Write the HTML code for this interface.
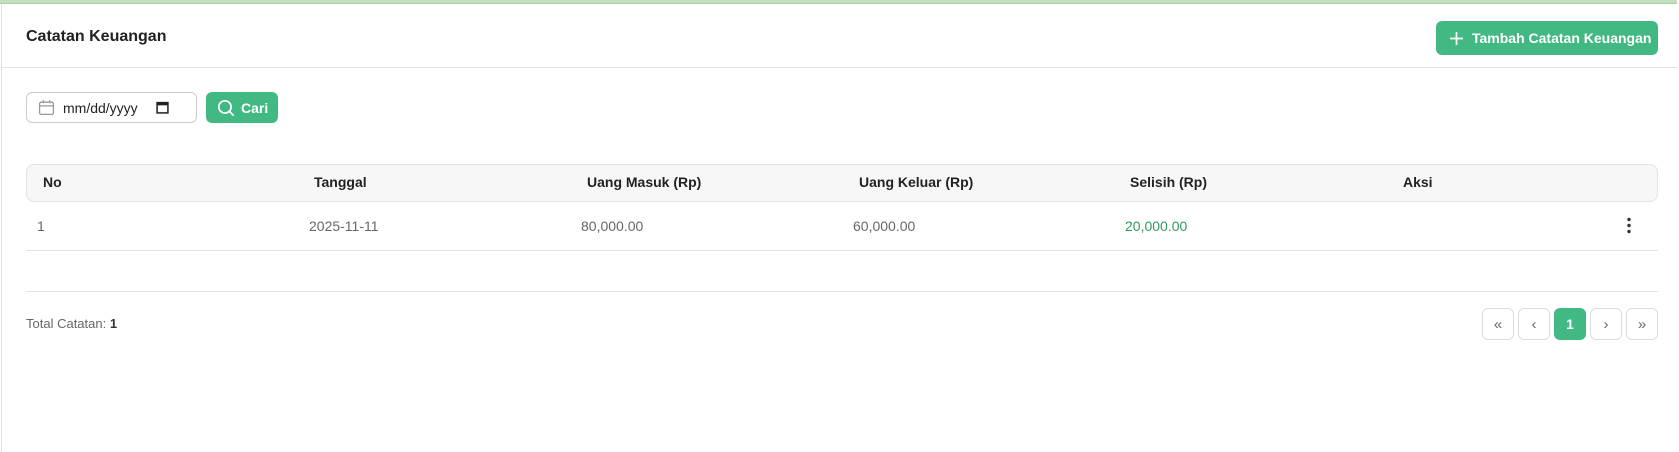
<!DOCTYPE html>
<html><head><style>
*{box-sizing:border-box;margin:0;padding:0}
body{width:1679px;height:452px;background:#fff;font-family:"Liberation Sans",sans-serif;position:relative;overflow:hidden;color:#222}
.abs{position:absolute}
.topbar{left:0;top:0;width:1677px;height:4px;background:#c3dfc0;border-bottom:1px solid #a9cfa6}
.lb{left:1px;top:4px;width:1px;height:448px;background:#e2e2e2}
.hl{height:1px;background:#e3e3e3}
.btn{background:#42b883;color:#fff;border-radius:6px;font-weight:bold;font-size:14px;display:flex;align-items:center}
.th{font-size:14px;font-weight:bold;color:#222;top:174px;line-height:16px}
.td{font-size:14px;color:#666;top:218px;line-height:16px}
.pg{width:32px;height:32px;border:1px solid #ddd;border-radius:6px;top:308px;display:flex;align-items:center;justify-content:center;color:#666;font-size:15px}
</style></head><body>
<div class="abs topbar"></div>
<div class="abs lb"></div>
<div class="abs" style="left:26px;top:28px;font-size:16px;font-weight:bold;color:#222;line-height:18px">Catatan Keuangan</div>
<div class="abs btn" style="left:1436px;top:21px;width:222px;height:34px;padding-left:13px">
<svg width="15" height="15" viewBox="0 0 14 14" style="margin-right:8px"><path d="M7 1v12M1 7h12" stroke="#fff" stroke-width="1.6"/></svg>Tambah Catatan Keuangan</div>
<div class="abs hl" style="left:2px;top:67px;width:1675px"></div>
<div class="abs" style="left:26px;top:92px;width:171px;height:31px;border:1px solid #ccc;border-radius:6px;display:flex;align-items:center;padding-left:11px;font-size:14px;color:#222">
<svg width="17" height="17" viewBox="0 0 16 16" style="margin-right:8px"><rect x="1.5" y="3" width="13" height="11.5" rx="1.5" fill="none" stroke="#999" stroke-width="1.2"/><path d="M1.5 6.5h13M5 1v3M11 1v3" stroke="#999" stroke-width="1.2"/></svg>
mm/dd/yyyy
<svg width="13" height="13" viewBox="0 0 12 12" style="margin-left:18px"><rect x="1" y="1.5" width="10" height="9.5" fill="none" stroke="#222" stroke-width="1.4"/><rect x="1" y="1.5" width="10" height="2.5" fill="#222"/></svg>
</div>
<div class="abs btn" style="left:206px;top:92px;width:72px;height:31px;padding-left:11px">
<svg width="18" height="18" viewBox="0 0 17 17" style="margin-right:6px"><circle cx="7.5" cy="7.5" r="5.8" fill="none" stroke="#fff" stroke-width="1.6"/><path d="M11.8 11.8l4 4" stroke="#fff" stroke-width="1.6"/></svg>Cari</div>
<div class="abs" style="left:26px;top:164px;width:1632px;height:38px;background:#f7f7f7;border:1px solid #e3e3e3;border-radius:8px"></div>
<div class="abs th" style="left:43px">No</div>
<div class="abs th" style="left:314px">Tanggal</div>
<div class="abs th" style="left:587px">Uang Masuk (Rp)</div>
<div class="abs th" style="left:859px">Uang Keluar (Rp)</div>
<div class="abs th" style="left:1130px">Selisih (Rp)</div>
<div class="abs th" style="left:1403px">Aksi</div>
<div class="abs td" style="left:37px">1</div>
<div class="abs td" style="left:309px">2025-11-11</div>
<div class="abs td" style="left:581px">80,000.00</div>
<div class="abs td" style="left:853px">60,000.00</div>
<div class="abs td" style="left:1125px;color:#2e9a5e">20,000.00</div>
<svg class="abs" style="left:1626px;top:217px" width="6" height="17"><circle cx="3" cy="2.5" r="1.7" fill="#333"/><circle cx="3" cy="8.5" r="1.7" fill="#333"/><circle cx="3" cy="14.5" r="1.7" fill="#333"/></svg>
<div class="abs hl" style="left:26px;top:250px;width:1632px"></div>
<div class="abs hl" style="left:26px;top:291px;width:1632px"></div>
<div class="abs" style="left:26px;top:316px;font-size:13px;color:#666">Total Catatan: <b style="color:#333">1</b></div>
<div class="abs pg" style="left:1482px">«</div>
<div class="abs pg" style="left:1518px">‹</div>
<div class="abs pg" style="left:1554px;background:#42b883;border-color:#42b883;color:#fff;font-weight:bold;font-size:14px">1</div>
<div class="abs pg" style="left:1590px">›</div>
<div class="abs pg" style="left:1626px">»</div>
</body></html>
